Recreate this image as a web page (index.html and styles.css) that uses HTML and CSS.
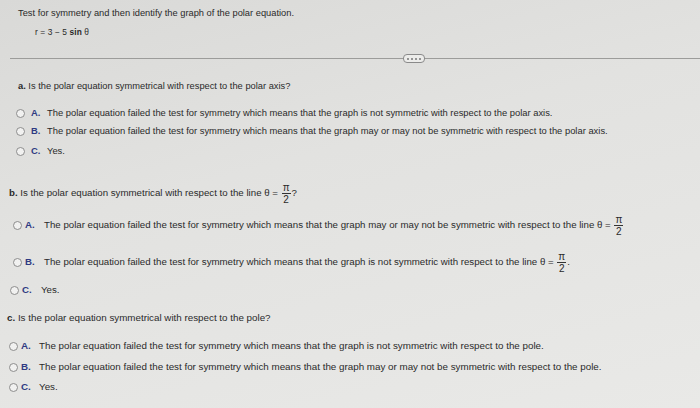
FILE: index.html
```html
<!DOCTYPE html>
<html>
<head>
<meta charset="utf-8">
<link rel="stylesheet" href="styles.css">
</head>
<body>
<div class="page">
  <div class="title">Test for symmetry and then identify the graph of the polar equation.</div>
  <div class="eq">r = 3 − 5 <b>sin</b> θ</div>
  <div class="divider"><span class="rule left"></span><span class="pill"><i></i><i></i><i></i><i></i></span><span class="rule right"></span></div>

  <section class="sec sec-a">
    <div class="q"><b>a.</b> Is the polar equation symmetrical with respect to the polar axis?</div>
    <div class="opt o1"><span class="radio"></span><span class="let">A.</span><span class="txt">The polar equation failed the test for symmetry which means that the graph is not symmetric with respect to the polar axis.</span></div>
    <div class="opt o2"><span class="radio"></span><span class="let">B.</span><span class="txt">The polar equation failed the test for symmetry which means that the graph may or may not be symmetric with respect to the polar axis.</span></div>
    <div class="opt o3"><span class="radio"></span><span class="let">C.</span><span class="txt">Yes.</span></div>
  </section>

  <section class="sec sec-b">
    <div class="q"><b>b.</b> Is the polar equation symmetrical with respect to the line θ = <span class="frac"><span class="num">π</span><span class="den">2</span></span>?</div>
    <div class="opt o1"><span class="radio"></span><span class="let">A.</span><span class="txt">The polar equation failed the test for symmetry which means that the graph may or may not be symmetric with respect to the line θ = <span class="frac"><span class="num">π</span><span class="den">2</span></span></span></div>
    <div class="opt o2"><span class="radio"></span><span class="let">B.</span><span class="txt">The polar equation failed the test for symmetry which means that the graph is not symmetric with respect to the line θ = <span class="frac"><span class="num">π</span><span class="den">2</span></span>.</span></div>
    <div class="opt o3"><span class="radio"></span><span class="let">C.</span><span class="txt">Yes.</span></div>
  </section>

  <section class="sec sec-c">
    <div class="q"><b>c.</b> Is the polar equation symmetrical with respect to the pole?</div>
    <div class="opt o1"><span class="radio"></span><span class="let">A.</span><span class="txt">The polar equation failed the test for symmetry which means that the graph is not symmetric with respect to the pole.</span></div>
    <div class="opt o2"><span class="radio"></span><span class="let">B.</span><span class="txt">The polar equation failed the test for symmetry which means that the graph may or may not be symmetric with respect to the pole.</span></div>
    <div class="opt o3"><span class="radio"></span><span class="let">C.</span><span class="txt">Yes.</span></div>
  </section>
</div>
</body>
</html>
```

FILE: styles.css
```css
html, body {
  margin: 0;
  padding: 0;
}
body {
  width: 700px;
  height: 408px;
  overflow: hidden;
  font-family: "Liberation Sans", Arial, sans-serif;
  font-size: 9.3px;
  color: #2a2a2a;
  background: linear-gradient(165deg, #d9d9d7 0%, #e2e2e0 40%, #e9e9e7 100%);
}
.page {
  display: flex;
  flex-direction: column;
  padding-top: 7px;
}
.title, .eq, .q, .opt {
  height: 12px;
  line-height: 12px;
  white-space: nowrap;
}
.title {
  padding-left: 18px;
}
.eq {
  margin-top: 7px;
  padding-left: 35px;
  font-size: 8.4px;
  letter-spacing: 0.1px;
}
.divider {
  margin-top: 16px;
  height: 9px;
  display: flex;
  align-items: center;
}
.rule {
  height: 1px;
  background: #9c9c9a;
}
.rule.left {
  margin-left: 10px;
  width: 393px;
}
.rule.right {
  flex: 1;
}
.pill {
  width: 20px;
  height: 7px;
  border: 1px solid #8a8a8a;
  border-radius: 4px;
  background: #ececea;
  display: flex;
  align-items: center;
  justify-content: center;
  gap: 2px;
}
.pill i {
  width: 2px;
  height: 2px;
  border-radius: 1px;
  background: #777;
}
.sec {
  display: flex;
  flex-direction: column;
}
.opt {
  display: flex;
  align-items: center;
}
.radio {
  width: 7px;
  height: 7px;
  border: 1px solid #8d8d8d;
  border-radius: 50%;
  background: #f1f1f0;
  flex: none;
}
.let {
  font-weight: bold;
  color: #2f3a82;
  flex: none;
}
.q b {
  font-weight: bold;
}
.frac {
  display: inline-flex;
  flex-direction: column;
  align-items: center;
  vertical-align: middle;
  font-size: 10px;
  line-height: 9px;
  margin: 0 1px;
}
.frac .num {
  border-bottom: 1px solid #333;
  padding: 0 1px 1px;
}
.frac .den {
  padding-top: 1px;
}

/* section a */
.sec-a { margin-top: 17px; font-size: 9.4px; }
.sec-a .q { padding-left: 18px; font-size: 9.3px; }
.sec-a .opt { padding-left: 16px; }
.sec-a .o1 { margin-top: 15px; }
.sec-a .o2 { margin-top: 6px; }
.sec-a .o3 { margin-top: 8px; }
.sec-a .radio { margin-right: 6px; }
.sec-a .let { width: 16px; }

/* section b */
.sec-b { margin-top: 26px; font-size: 9.7px; }
.sec-b .q { padding-left: 9px; }
.sec-b .opt { padding-left: 13px; }
.sec-b .o1 { margin-top: 24px; }
.sec-b .o2 { margin-top: 25px; }
.sec-b .o3 { margin-top: 16px; padding-left: 10px; }
.sec-b .radio { margin-right: 3px; }
.sec-b .let { width: 19px; }

/* section c */
.sec-c { margin-top: 16px; font-size: 9.8px; }
.sec-c .q { padding-left: 7px; }
.sec-c .opt { padding-left: 9px; }
.sec-c .o1 { margin-top: 16px; }
.sec-c .o2 { margin-top: 9px; }
.sec-c .o3 { margin-top: 8px; }
.sec-c .radio { margin-right: 3px; }
.sec-c .let { width: 18px; }
```
